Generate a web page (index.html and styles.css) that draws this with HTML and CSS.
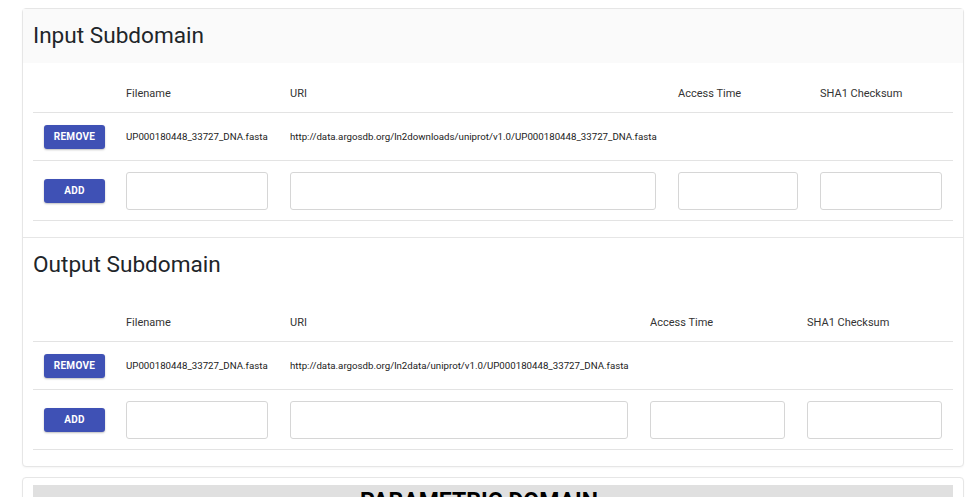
FILE: index.html
```html
<!DOCTYPE html>
<html>
<head>
<meta charset="utf-8">
<link rel="stylesheet" href="styles.css">
</head>
<body>
<div class="page">
  <div class="card">
    <section class="section">
      <div class="section-head grey"><h2>Input Subdomain</h2></div>
      <div class="section-body">
        <table class="files in">
          <colgroup><col class="c1"><col class="c2"><col class="c3"><col class="c4"><col class="c5"></colgroup>
          <thead>
            <tr><th></th><th>Filename</th><th>URI</th><th>Access Time</th><th>SHA1 Checksum</th></tr>
          </thead>
          <tbody>
            <tr class="data"><td><button class="btn">REMOVE</button></td><td>UP000180448_33727_DNA.fasta</td><td>http://data.argosdb.org/ln2downloads/uniprot/v1.0/UP000180448_33727_DNA.fasta</td><td></td><td></td></tr>
            <tr class="add"><td><button class="btn">ADD</button></td><td><input class="field"></td><td><input class="field"></td><td><input class="field"></td><td><input class="field"></td></tr>
          </tbody>
        </table>
      </div>
    </section>
    <section class="section divided">
      <div class="section-head"><h2>Output Subdomain</h2></div>
      <div class="section-body">
        <table class="files out">
          <colgroup><col class="c1"><col class="c2"><col class="c3"><col class="c4"><col class="c5"></colgroup>
          <thead>
            <tr><th></th><th>Filename</th><th>URI</th><th>Access Time</th><th>SHA1 Checksum</th></tr>
          </thead>
          <tbody>
            <tr class="data"><td><button class="btn">REMOVE</button></td><td>UP000180448_33727_DNA.fasta</td><td>http://data.argosdb.org/ln2data/uniprot/v1.0/UP000180448_33727_DNA.fasta</td><td></td><td></td></tr>
            <tr class="add"><td><button class="btn">ADD</button></td><td><input class="field"></td><td><input class="field"></td><td><input class="field"></td><td><input class="field"></td></tr>
          </tbody>
        </table>
      </div>
    </section>
  </div>
  <div class="card param">
    <div class="param-bar">
      <span class="param-title">PARAMETRIC DOMAIN</span>
      <svg class="help" width="16" height="16" viewBox="0 0 24 24"><path fill="#000" d="M11 18h2v-2h-2v2zm1-16C6.480 2 2 6.48 2 12s4.48 10 10 10 10-4.48 10-10S17.52 2 12 2zm0 18c-4.41 0-8-3.590-8-8s3.59-8 8-8 8 3.59 8 8-3.59 8-8 8zm0-14c-2.21 0-4 1.79-4 4h2c0-1.1.9-2 2-2s2 .9 2 2c0 2-3 1.75-3 5h2c0-2.25 3-2.5 3-5 0-2.21-1.79-4-4-4z"/></svg>
    </div>
  </div>
</div>
</body>
</html>
```
FILE: styles.css
```css
html, body { margin: 0; padding: 0; background: #fff; }
body { font-family: Roboto, "Noto Sans", Arial, sans-serif; color: #212529; }
.page { padding: 8px 11px 0 22px; }
.card {
  border: 1px solid #e6e6e6;
  border-radius: 4px;
  background: #fff;
  box-shadow: 0 1px 2px rgba(0,0,0,0.04);
}
.section.divided { border-top: 1px solid #e6e6e6; }
.section-head { height: 54px; padding: 0 10px; display: flex; align-items: center; }
.section-head.grey { background: #fafafa; }
.section-head h2 { margin: 0; font-size: 22.6px; font-weight: 400; color: #212529; line-height: 1; }
.section-body { padding: 11px 10px 16px 10px; }
.files { width: 100%; border-collapse: collapse; table-layout: fixed; }
.files .c1 { width: 82px; }
.files .c2 { width: 164px; }
.files.in .c3 { width: 388px; }
.files.in .c4 { width: 142px; }
.files.in .c5 { width: 144px; }
.files.out .c3 { width: 360px; }
.files.out .c4 { width: 157px; }
.files.out .c5 { width: 157px; }
.files th {
  text-align: left; font-weight: 400; font-size: 11px; color: #333;
  padding: 13px 11px 11px; line-height: 14px; height: 14px;
  border-bottom: 1px solid #e3e3e3;
}
.files td {
  font-size: 9.7px; color: #222; padding: 0 11px;
  border-bottom: 1px solid #e3e3e3; white-space: nowrap;
}
.files tr.data td { height: 47px; }
.files tr.add td { height: 59px; }
.btn {
  display: block; width: 61px; height: 24px; border: 0; border-radius: 3px;
  background: #3f51b5; color: #fff; font-family: Roboto, Arial, sans-serif;
  font-size: 10px; font-weight: 700; letter-spacing: 0.3px; padding: 0;
  box-shadow: 0 1px 2px rgba(0,0,0,0.25); cursor: pointer;
}
.field {
  display: block; width: 100%; box-sizing: border-box; height: 38px;
  border: 1px solid #d6d6d6; border-radius: 3px; background: #fff; margin: 0;
}
.param { margin-top: 10px; padding: 7px 10px 0 10px; height: 40px; }
.param-bar {
  background: #e0e0e0; height: 40px; display: flex; justify-content: center;
  align-items: flex-start; padding-top: 5px; box-sizing: border-box; gap: 12px;
}
.param-title { font-size: 23px; font-weight: 700; color: #000; line-height: 24px; }
.help { margin-top: 7px; }
```
